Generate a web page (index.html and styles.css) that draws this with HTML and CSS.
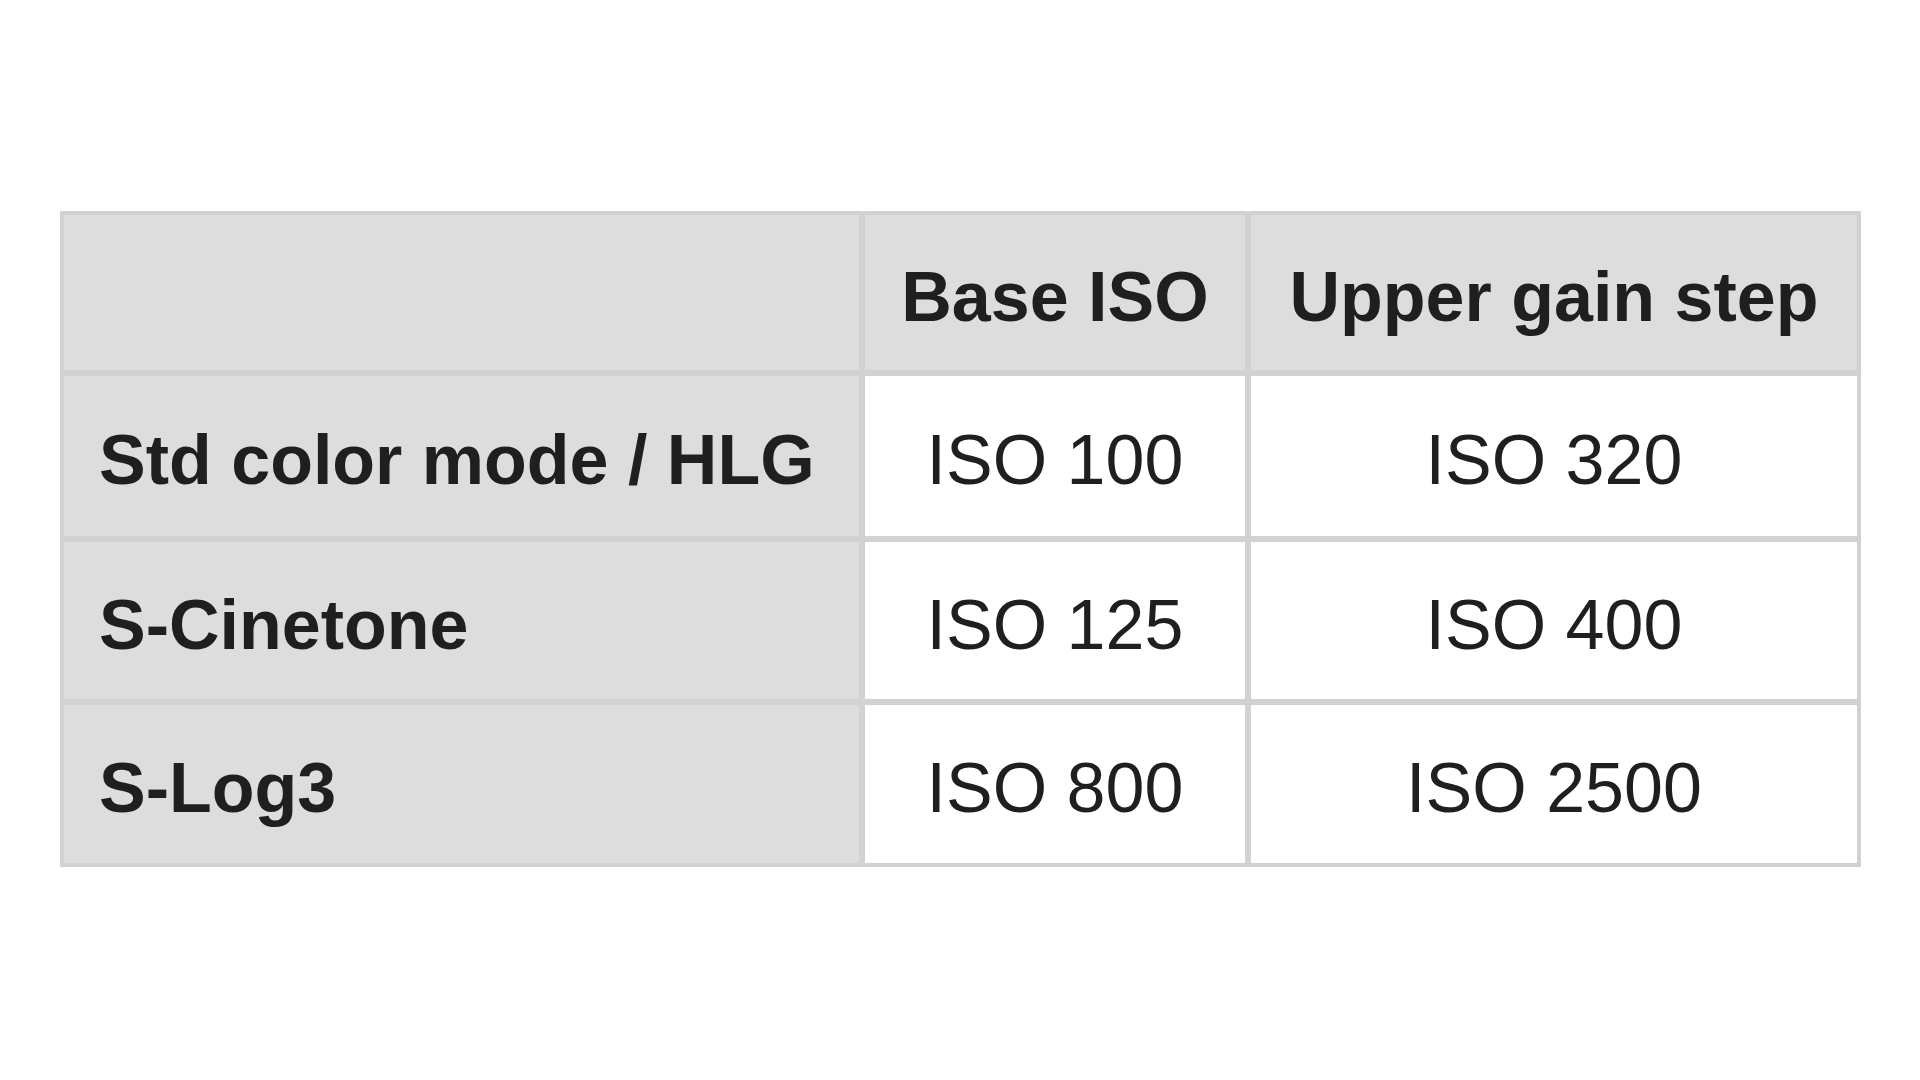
FILE: index.html
```html
<!DOCTYPE html>
<html lang="en">
<head>
  <meta charset="UTF-8" />
  <title>Base ISO</title>
  <link rel="stylesheet" href="styles.css">
</head>
<body>
  <table class="iso-table">
    <colgroup>
      <col class="col-mode">
      <col class="col-base">
      <col class="col-upper">
    </colgroup>
    <tr class="row-head">
      <th class="corner"></th>
      <th>Base ISO</th>
      <th>Upper gain step</th>
    </tr>
    <tr class="row-std">
      <th class="mode">Std color mode / HLG</th>
      <td>ISO 100</td>
      <td>ISO 320</td>
    </tr>
    <tr class="row-cine">
      <th class="mode">S-Cinetone</th>
      <td>ISO 125</td>
      <td>ISO 400</td>
    </tr>
    <tr class="row-log">
      <th class="mode">S-Log3</th>
      <td>ISO 800</td>
      <td>ISO 2500</td>
    </tr>
  </table>
</body>
</html>
```

FILE: styles.css
```css
body {
  margin: 0;
  background: #fff;
  font-family: "Liberation Sans", Arial, sans-serif;
  color: #1f1f1f;
}

.iso-table {
  margin: 211px 0 0 60px;
  width: 1801px;
  table-layout: fixed;
  border-collapse: separate;
  border-spacing: 0;
  border: 4px solid #d2d2d2;
  font-size: 70px;
}

.col-mode {
  width: 801px;
}

.col-base {
  width: 386px;
}

/* row heights include the 6px divider below */
.row-head {
  height: 161px;
}

.row-std {
  height: 166px;
}

.row-cine {
  height: 163px;
}

.row-log {
  height: 158px;
}

.iso-table th,
.iso-table td {
  padding: 8px 35px 0;
  border-right: 6px solid #d2d2d2;
  border-bottom: 6px solid #d2d2d2;
  vertical-align: middle;
  text-align: center;
  white-space: nowrap;
}

.iso-table th:last-child,
.iso-table td:last-child {
  border-right: none;
}

.iso-table tr:last-child th,
.iso-table tr:last-child td {
  border-bottom: none;
}

.iso-table th {
  background: #dddddd;
  font-weight: bold;
}

.iso-table td {
  background: #fff;
  font-weight: normal;
}

.iso-table th.mode {
  text-align: left;
}
```
